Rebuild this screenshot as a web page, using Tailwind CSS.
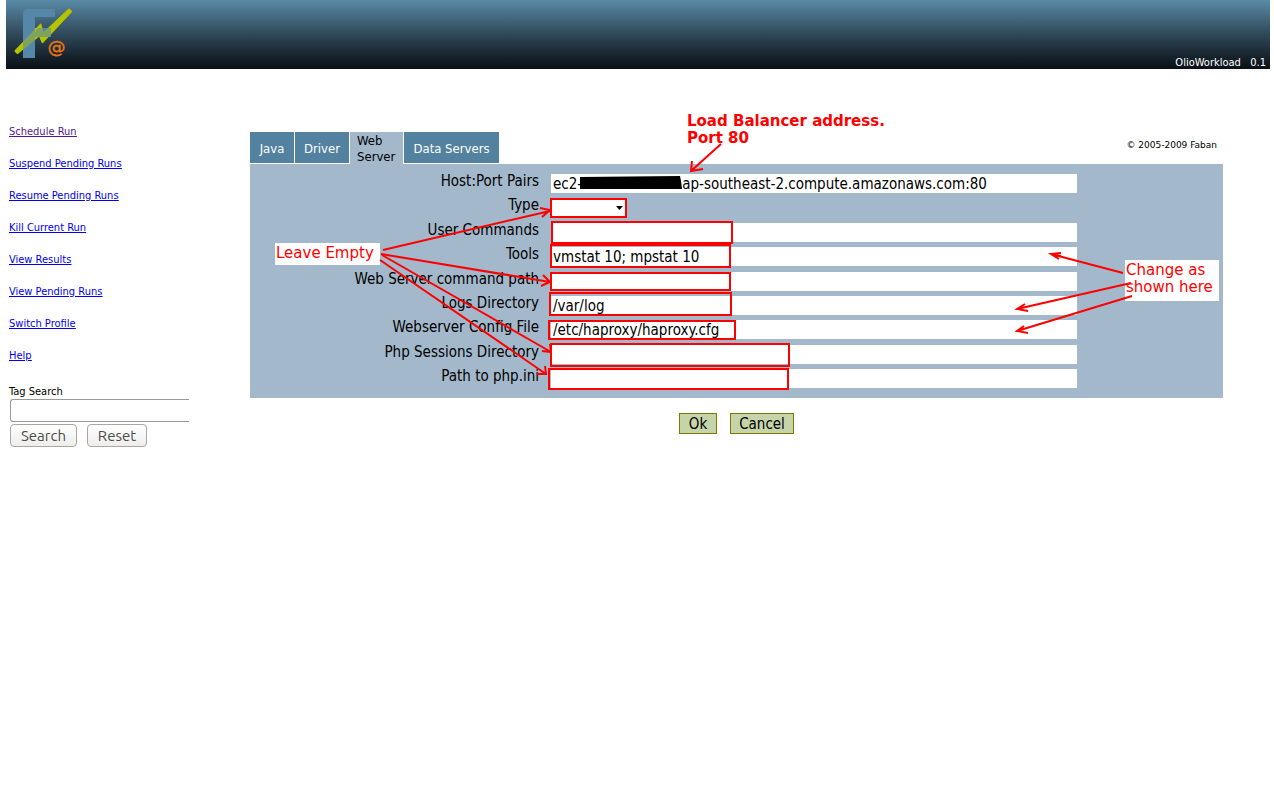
<!DOCTYPE html>
<html lang="en">
<head>
<meta charset="utf-8">
<meta name="viewport" content="width=device-width, initial-scale=1">
<title>OlioWorkload - Schedule Run</title>
<script src="https://cdn.jsdelivr.net/npm/@tailwindcss/browser@4"></script>
</head>
<body class="bg-white font-['DejaVu_Sans',sans-serif] text-black">
<header class="ml-[6px] mr-1 flex h-[69px] items-end justify-between bg-linear-to-b from-[#5a8ba7] to-[#0a1016]">
  <svg class="h-[69px] w-[80px]" viewBox="6 0 80 69" role="img" aria-label="Faban">
    <path d="M23 58V14Q23 9 28 9H55V17H35V28H51V37H35V58Z" fill="#5687a8"/>
    <path d="M15.500 51L40.500 25L43 34L69 9.500L71 11.500L42.500 42L39.500 35L17.500 53Z" fill="#b4c400" stroke="#b4c400" stroke-width="2" stroke-linejoin="round"/>
    <path d="M23 58V14Q23 9 28 9H55V17H35V28H51V37H35V58Z" fill="#5687a8" fill-opacity=".55"/>
    <path d="M35 32L41 23L42 28H35ZM40 37H47L42.500 43.500Z" fill="#b4c400"/>
    <text x="47.500" y="53" font-size="18" font-family="DejaVu Sans" fill="#f5780a" stroke="#f5780a" stroke-width=".3">@</text>
  </svg>
  <p class="pr-1 text-[11px] leading-[13px] whitespace-pre font-['DejaVu_Sans_Condensed','DejaVu_Sans',sans-serif] text-white">OlioWorkload   0.1</p>
</header>
<div class="flex">
  <aside class="w-[250px] shrink-0 pt-[56px] pl-[9px] text-[11px] leading-[14px] font-['DejaVu_Sans_Condensed','DejaVu_Sans',sans-serif]">
    <nav class="flex flex-col items-start gap-[18px] text-[#0000ee] underline">
      <a href="#" class="text-[#551a8b]">Schedule Run</a>
      <a href="#">Suspend Pending Runs</a>
      <a href="#">Resume Pending Runs</a>
      <a href="#">Kill Current Run</a>
      <a href="#">View Results</a>
      <a href="#">View Pending Runs</a>
      <a href="#">Switch Profile</a>
      <a href="#">Help</a>
    </nav>
    <form class="mt-[22px]">
      <label for="tag" class="block">Tag Search</label>
      <input id="tag" type="text" class="ml-px block h-[23px] w-[179px] rounded-l-[3px] border border-r-0 border-[#9c9a96] bg-white px-1 text-sm">
      <div class="mt-[2px] ml-px flex gap-[10px] text-[15px] text-[#4c4c4c] font-[Ubuntu,'Noto_Sans',sans-serif]">
        <button type="button" class="h-[23px] w-[67px] rounded-[4px] border border-[#a9a7a4] bg-linear-to-b from-white to-[#eeedec] leading-[20px]">Search</button>
        <button type="reset" class="h-[23px] w-[60px] rounded-[4px] border border-[#a9a7a4] bg-linear-to-b from-white to-[#eeedec] leading-[20px]">Reset</button>
      </div>
    </form>
  </aside>
  <main class="relative min-w-0 flex-1 pt-[63px] pr-[51px] font-['DejaVu_Sans_Condensed','DejaVu_Sans',sans-serif]">
    <div class="flex h-8 items-start justify-between">
      <div class="flex gap-px text-[13px] leading-4 text-white">
        <button type="button" class="h-[31px] w-[44px] bg-[#5382a1] pt-[2px]">Java</button>
        <button type="button" class="h-[31px] w-[54px] bg-[#5382a1] pt-[2px]">Driver</button>
        <button type="button" class="h-8 w-[53px] bg-[#a3b8cb] pt-px pl-[7px] text-left text-black">Web Server</button>
        <button type="button" class="h-[31px] w-[95px] bg-[#5382a1] pt-[2px]">Data Servers</button>
      </div>
      <p class="pt-[7px] pr-[6px] text-[9px] leading-[12px] font-['DejaVu_Sans',sans-serif]">© 2005-2009 Faban</p>
    </div>
    <form>
      <div class="flex h-[234px] flex-col justify-between bg-[#a3b8cb] pt-[10px] pr-[146px] pb-[10px] text-[15px] leading-[19px]">
        <div class="flex h-[19px] gap-[12px]"><label for="f1" class="-mt-[2px] w-[289px] shrink-0 text-right">Host:Port Pairs</label><input id="f1" type="text" value="ec2-xxxxxxxxxxxx.ap-southeast-2.compute.amazonaws.com:80" class="min-w-0 flex-1 bg-white pt-[2px] pl-[2px]"></div>
        <div class="flex h-[19px] gap-[12px]"><label for="f2" class="-mt-[2px] w-[289px] shrink-0 text-right">Type</label>
          <div class="relative"><select id="f2" class="h-[19px] w-[75px] appearance-none bg-white"><option></option><option>haproxy</option></select>
          <svg class="pointer-events-none absolute top-[8px] right-[3px] h-[4px] w-[7px]" viewBox="0 0 7 4"><path d="M0 0H7L3.500 4Z"/></svg></div></div>
        <div class="flex h-[19px] gap-[12px]"><label for="f3" class="-mt-[2px] w-[289px] shrink-0 text-right">User Commands</label><input id="f3" type="text" class="min-w-0 flex-1 bg-white pt-[2px] pl-[2px]"></div>
        <div class="flex h-[19px] gap-[12px]"><label for="f4" class="-mt-[2px] w-[289px] shrink-0 text-right">Tools</label><input id="f4" type="text" value="vmstat 10; mpstat 10" class="min-w-0 flex-1 bg-white pt-[2px] pl-[2px]"></div>
        <div class="flex h-[19px] gap-[12px]"><label for="f5" class="-mt-[2px] w-[289px] shrink-0 text-right">Web Server command path</label><input id="f5" type="text" class="min-w-0 flex-1 bg-white pt-[2px] pl-[2px]"></div>
        <div class="flex h-[19px] gap-[12px]"><label for="f6" class="-mt-[2px] w-[289px] shrink-0 text-right">Logs Directory</label><input id="f6" type="text" value="/var/log" class="min-w-0 flex-1 bg-white pt-[2px] pl-[2px]"></div>
        <div class="flex h-[19px] gap-[12px]"><label for="f7" class="-mt-[2px] w-[289px] shrink-0 text-right">Webserver Config File</label><input id="f7" type="text" value="/etc/haproxy/haproxy.cfg" class="min-w-0 flex-1 bg-white pt-[2px] pl-[2px]"></div>
        <div class="flex h-[19px] gap-[12px]"><label for="f8" class="-mt-[2px] w-[289px] shrink-0 text-right">Php Sessions Directory</label><input id="f8" type="text" class="min-w-0 flex-1 bg-white pt-[2px] pl-[2px]"></div>
        <div class="flex h-[19px] gap-[12px]"><label for="f9" class="-mt-[2px] w-[289px] shrink-0 text-right">Path to php.ini</label><input id="f9" type="text" class="min-w-0 flex-1 bg-white pt-[2px] pl-[2px]"></div>
      </div>
      <div class="mt-[15px] flex justify-center gap-[13px] text-[15px] leading-[19px]">
        <button type="submit" class="h-[21px] w-[38px] border border-[#7f7500] bg-[#c5d5a9] pt-px">Ok</button>
        <button type="button" class="h-[21px] w-[64px] border border-[#7f7500] bg-[#c5d5a9] pt-px">Cancel</button>
      </div>
    </form>

    <!-- Annotations drawn over the form -->
    <p class="absolute top-[44px] left-[437px] text-[15px] leading-[17px] font-bold whitespace-nowrap text-[#ff0000] font-['DejaVu_Sans',sans-serif]">Load Balancer address.<br>Port 80</p>
    <p class="absolute top-[174px] left-[25px] h-[22px] w-[105px] bg-white pl-px text-[15px] leading-[21px] whitespace-nowrap text-[#ff0000] font-['DejaVu_Sans',sans-serif]">Leave Empty</p>
    <p class="absolute top-[191px] left-[875px] h-[41px] w-[94px] bg-white pt-[2px] pl-px text-[15px] leading-[17px] whitespace-nowrap text-[#ff0000] font-['DejaVu_Sans',sans-serif]">Change as<br>shown here</p>
    <svg class="pointer-events-none absolute top-0 left-0 h-[340px] w-[980px]" viewBox="250 69 980 340" fill="none" stroke="#ff0000" stroke-width="2" aria-hidden="true">
      <path d="M580 177L680 176L681 181L682 189L580 189Z" fill="#000" stroke="none"/>
      <rect x="551" y="199" width="75" height="18"/>
      <rect x="552" y="222" width="180" height="21"/>
      <rect x="551" y="245" width="179" height="22"/>
      <rect x="551" y="273" width="179" height="17"/>
      <rect x="550" y="293" width="181" height="22"/>
      <rect x="549" y="321" width="186" height="18"/>
      <rect x="551" y="344" width="238" height="22"/>
      <rect x="549" y="369" width="239" height="20"/>
      <path d="M721 144L691 171M692 161L691 171L703 169"/>
      <path d="M383 250L550 211M540 208L550 210L542 217"/>
      <path d="M381 254L550 282M543 275L550 282L541 286"/>
      <path d="M382 255L551 352M550 344L551 352L542 351"/>
      <path d="M380 260L546 374M545 366L546 374L537 374"/>
      <path d="M1123 273L1051 254M1061 253L1051 254L1059 259M1054 255L1061 256"/>
      <path d="M1131 283L1017 309M1025 304L1017 309L1028 311"/>
      <path d="M1132 296L1017 331M1024 326L1017 331L1028 333"/>
    </svg>
  </main>
</div>
</body>
</html>
